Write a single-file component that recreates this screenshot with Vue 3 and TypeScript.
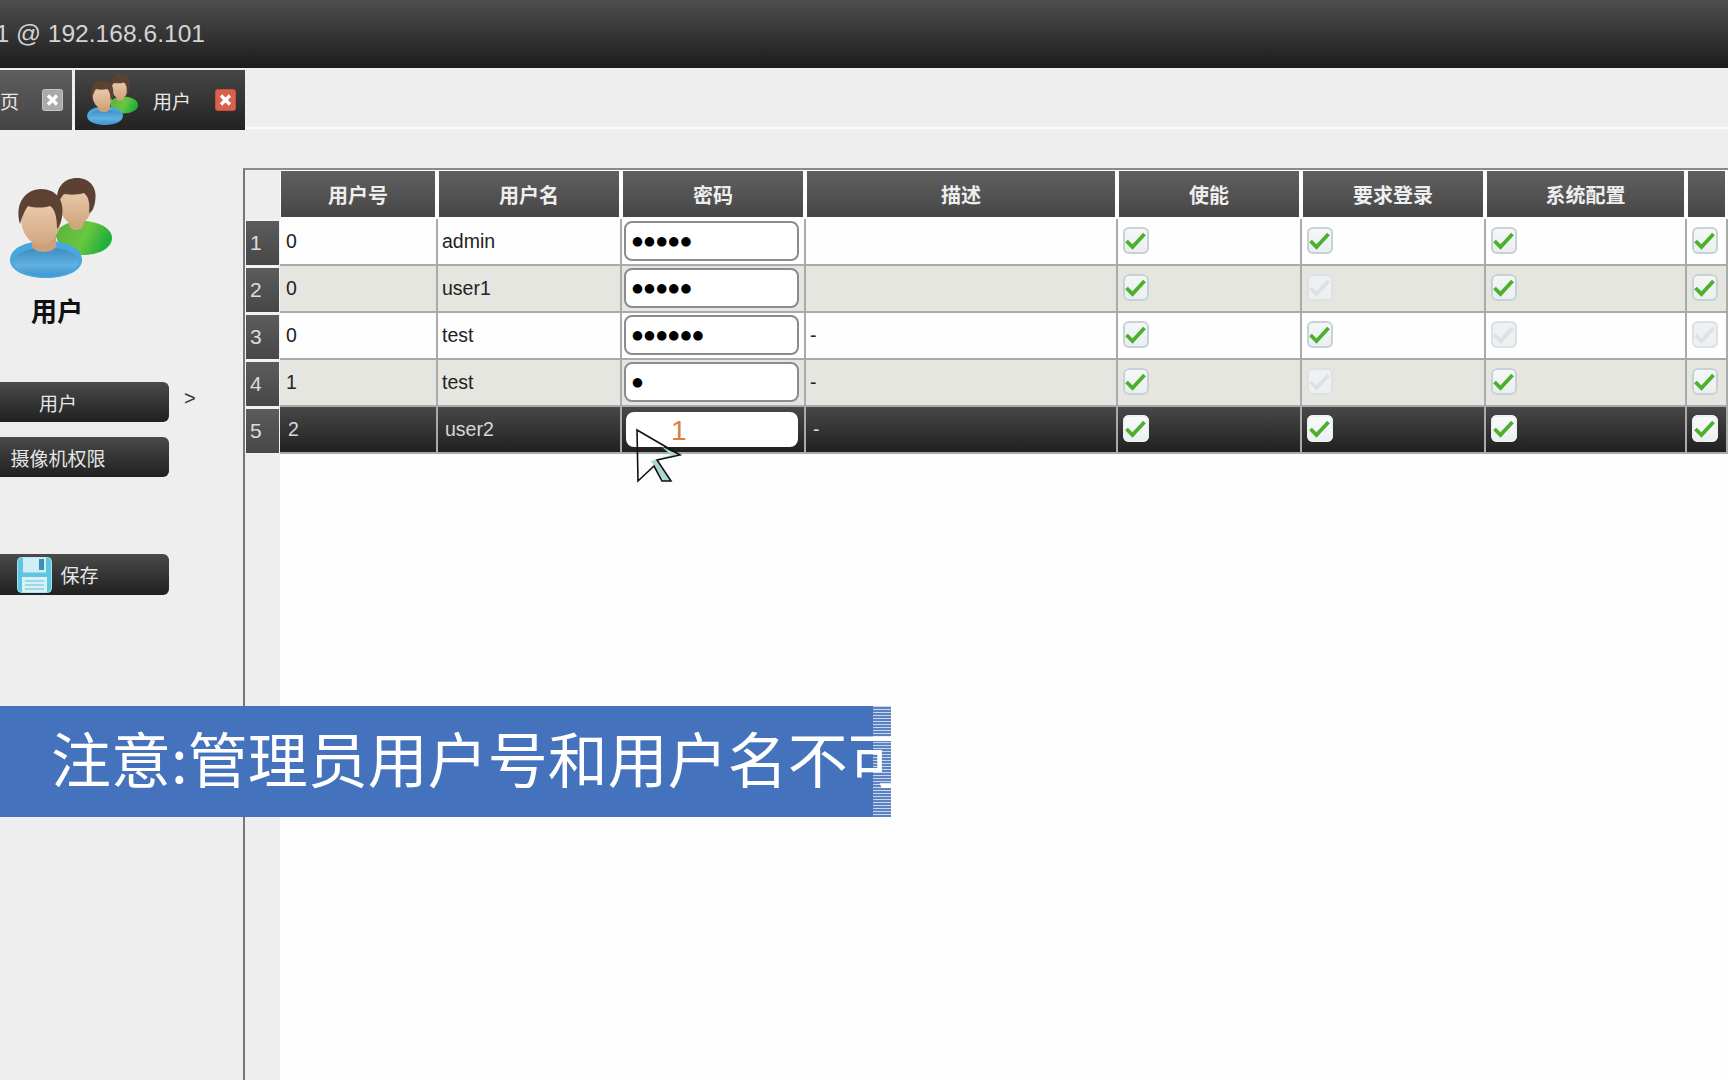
<script setup lang="ts">
interface Row {
  no: number
  id: string
  name: string
  pwd: number | string
  desc: string
  checks: boolean[]
  active?: boolean
}

const headers: string[] = ['用户号', '用户名', '密码', '描述', '使能', '要求登录', '系统配置', '']

const rows: Row[] = [
  { no: 1, id: '0', name: 'admin', pwd: 5, desc: '', checks: [true, true, true, true] },
  { no: 2, id: '0', name: 'user1', pwd: 5, desc: '', checks: [true, false, true, true] },
  { no: 3, id: '0', name: 'test', pwd: 6, desc: '-', checks: [true, true, false, false] },
  { no: 4, id: '1', name: 'test', pwd: 1, desc: '-', checks: [true, false, true, true] },
  { no: 5, id: '2', name: 'user2', pwd: '1', desc: '-', checks: [true, true, true, true], active: true }
]

const dots = (n: number): string => '●'.repeat(n)
</script>

<template>
  <div class="page">
    <svg class="defs" width="0" height="0" aria-hidden="true">
      <defs>
        <linearGradient id="blueBody" x1="0" y1="0" x2="0" y2="1">
          <stop offset="0" stop-color="#3a8cc0" />
          <stop offset="0.6" stop-color="#62b0e0" />
          <stop offset="1" stop-color="#3d98d4" />
        </linearGradient>
        <linearGradient id="greenBody" x1="0" y1="0" x2="1" y2="0.3">
          <stop offset="0" stop-color="#5aae3c" />
          <stop offset="0.6" stop-color="#6ac640" />
          <stop offset="1" stop-color="#22b03a" />
        </linearGradient>
        <linearGradient id="skin" x1="0" y1="0" x2="0" y2="1">
          <stop offset="0" stop-color="#f0d6bc" />
          <stop offset="1" stop-color="#d2a67e" />
        </linearGradient>
        <symbol id="users" viewBox="0 0 102 100">
          <path d="M45 56C50 46 62 43 72 43c16 0 30 7 30 17 0 11-15 17-29 17-8 0-16-2-22-5z" fill="url(#greenBody)" />
          <path d="M59 36h15v9c0 4-4 7-8 7s-7-3-7-7z" fill="#cfa57e" />
          <ellipse cx="66" cy="24" rx="16.500" ry="23" fill="url(#skin)" />
          <path d="M48 27C44 10 54 0 67 0c13 0 21 10 18 24-1 6-3 10-6 11 1-9 0-16-5-20-6 2-15 2-20 1-3 3-5 7-6 11z" fill="#5c4032" />
          <path d="M0 82C0 71 14 63 36 63s36 8 36 19-16 18-36 18S0 93 0 82z" fill="#4aa6df" />
          <ellipse cx="36" cy="84" rx="33" ry="14.500" fill="url(#blueBody)" />
          <path d="M22 58h24v10c0 3-6 6-12 6s-12-3-12-6z" fill="#cba07a" />
          <ellipse cx="31" cy="40" rx="20" ry="27" fill="url(#skin)" />
          <path d="M10 46C4 25 16 11 31 11c15 0 24 11 21 28-1 6-3 10-5 12 0-12-2-20-7-23-7 2-15 2-22 0-3 4-6 11-8 18z" fill="#5d4233" />
        </symbol>
        <symbol id="check" viewBox="0 0 26 27">
          <path d="M3.500 14l6 6L21.500 7" fill="none" stroke="currentColor" stroke-width="3.800" />
        </symbol>
      </defs>
    </svg>

    <header class="topbar">
      <div class="title">1 @ 192.168.6.101</div>
    </header>

    <nav class="tabs">
      <div class="tab inactive">
        <span class="tab-label">首页</span>
        <svg class="close" viewBox="0 0 21 22"><rect x="0.500" y="0.500" width="20" height="21" rx="2" fill="#aaa" stroke="#c4c4c4" /><path d="M6 6.500l9 9M15 6.500l-9 9" stroke="#fff" stroke-width="3.400" /></svg>
      </div>
      <div class="tab active">
        <svg class="tab-icon"><use href="#users" /></svg>
        <span class="tab-label">用户</span>
        <svg class="close" viewBox="0 0 21 22"><rect x="0.500" y="0.500" width="20" height="21" rx="2" fill="#d9604c" stroke="#c4503f" /><path d="M6 6.500l9 9M15 6.500l-9 9" stroke="#fff" stroke-width="3.400" /></svg>
      </div>
    </nav>

    <main class="main">
      <aside class="side">
        <svg class="big-icon"><use href="#users" /></svg>
        <div class="side-label">用户</div>
        <div class="nav-row">
          <button class="btn">用户</button>
          <span class="arrow">&gt;</span>
        </div>
        <button class="btn second">摄像机权限</button>
        <button class="btn save">
          <svg class="disk" viewBox="0 0 35 36">
            <rect x="0.500" y="0.500" width="34" height="35" rx="4" fill="#5ec6de" stroke="#a5e2ee" />
            <rect x="6" y="0.500" width="23" height="15" fill="#cfeef5" />
            <rect x="22" y="2" width="5" height="11" fill="#3f8fb0" />
            <rect x="5" y="20" width="25" height="15" fill="#d7f1f6" />
            <path d="M8 24h19M8 28h19M8 32h19" stroke="#8ccfdf" stroke-width="1.500" />
          </svg>
          <span>保存</span>
        </button>
      </aside>

      <section class="content">
        <div class="panel">
          <div class="row head">
            <div class="gutter"></div>
            <div v-for="(h, i) in headers" :key="i" class="th">{{ h }}</div>
          </div>
          <div
            v-for="(r, ri) in rows"
            :key="r.no"
            class="row body"
            :class="{ alt: ri % 2 === 1, current: r.active }"
          >
            <div class="gutter"><span class="no">{{ r.no }}</span></div>
            <div class="td text first">{{ r.id }}</div>
            <div class="td text">{{ r.name }}</div>
            <div class="td pwd">
              <div v-if="typeof r.pwd === 'number'" class="field"><span class="dots">{{ dots(r.pwd) }}</span></div>
              <div v-else class="field editing">{{ r.pwd }}</div>
            </div>
            <div class="td text">{{ r.desc }}</div>
            <div v-for="(c, ci) in r.checks" :key="ci" class="td chk">
              <span class="box" :class="{ off: !c }">
                <svg class="tick"><use href="#check" /></svg>
              </span>
            </div>
          </div>
        </div>
      </section>
    </main>

    <div class="banner">
      <span class="banner-text">注意:管理员用户号和用户名不可</span>
    </div>

    <svg class="cursor" viewBox="0 0 50 56">
      <path d="M26 18L43 27 21 32 35 53H29L16 33 36 27z" fill="#a9d8d3" />
      <path d="M2 2L45 27 22 32 36 53H27L19 38 3 53z" fill="none" stroke="#111" stroke-width="1.600" />
    </svg>
  </div>
</template>

<style>
html, body {
  margin: 0;
  overflow: hidden;
  background: #eee;
}
</style>

<style scoped>
.page {
  position: relative;
  width: 1728px;
  height: 1080px;
  overflow: hidden;
  display: flex;
  flex-direction: column;
  background: #eee;
  font-family: "Liberation Sans", "Noto Sans CJK SC", sans-serif;
}
.defs { position: absolute; }

.topbar {
  height: 68px;
  flex: none;
  display: flex;
  align-items: center;
  background: linear-gradient(#4e4e4e, #1c1c1c);
}
.title {
  width: 205px;
  display: flex;
  justify-content: flex-end;
  overflow: hidden;
  white-space: nowrap;
  font-size: 24.600px;
  color: #d4d4d4;
}

.tabs {
  height: 61px;
  flex: none;
  box-sizing: border-box;
  display: flex;
  gap: 3px;
  padding-top: 2px;
  background: #eee;
  border-bottom: 2px solid #fafafa;
}
.tab {
  display: flex;
  align-items: center;
  height: 60px;
  box-sizing: border-box;
  color: #e8e8e8;
  font-size: 19px;
}
.tab.inactive {
  width: 72px;
  justify-content: flex-end;
  overflow: hidden;
  padding-right: 9px;
  background: linear-gradient(#5e5e5e, #444);
}
.tab.active {
  width: 170px;
  padding-left: 12px;
  background: linear-gradient(#474747, #222);
}
.tab-label {
  flex: none;
  white-space: nowrap;
}
.inactive .tab-label { margin-right: 23px; }
.active .tab-label { margin-left: 15px; }
.tab-icon {
  width: 51px;
  height: 50px;
  flex: none;
}
.close {
  width: 21px;
  height: 22px;
  flex: none;
}
.active .close { margin-left: 24px; }

.main {
  flex: 1;
  display: flex;
  min-height: 0;
}
.side {
  width: 243px;
  flex: none;
  display: flex;
  flex-direction: column;
  padding-top: 49px;
  box-sizing: border-box;
}
.big-icon {
  width: 102px;
  height: 100px;
  margin-left: 10px;
  flex: none;
}
.side-label {
  width: 114px;
  margin-top: 16px;
  text-align: center;
  font-size: 26px;
  line-height: 36px;
  font-weight: 700;
  color: #111;
}
.nav-row {
  display: flex;
  margin-top: 52px;
  gap: 15px;
}
.arrow {
  font-size: 20px;
  line-height: 32px;
  color: #333;
}
.btn {
  width: 226px;
  height: 40px;
  margin-left: -57px;
  flex: none;
  display: flex;
  align-items: center;
  justify-content: center;
  gap: 8px;
  padding: 0 0 0 4px;
  border: 0;
  border-radius: 6px;
  background: linear-gradient(#4a4a4a, #202020);
  color: #e6e6e6;
  font-family: inherit;
  font-size: 19px;
}
.second { margin-top: 15px; }
.save { margin-top: 77px; height: 41px; }
.disk { width: 35px; height: 36px; flex: none; }

.content {
  flex: 1;
  min-width: 0;
  padding-top: 39px;
  display: flex;
}
.panel {
  flex: 1;
  box-sizing: border-box;
  border-left: 2px solid #777;
  border-top: 2px solid #8a8a8a;
  padding-top: 1px;
  background: linear-gradient(90deg, #eee 35px, #fdfdfd 35px);
}
.row {
  display: grid;
  grid-template-columns: 35px 158px 184px 184px 312px 184px 184px 201px 41px;
}
.head {
  height: 48px;
}
.th {
  margin: 0 3px 2px 1px;
  display: flex;
  align-items: center;
  justify-content: center;
  background: linear-gradient(#606060, #464646);
  color: #eee;
  font-size: 20px;
  font-weight: 700;
}
.body {
  height: 47px;
  color: #222;
  font-size: 19.500px;
}
.gutter {
  box-sizing: border-box;
  min-width: 0;
}
.body .gutter {
  padding: 2px 1px 0 1px;
  background: #f2f2f2;
}
.no {
  display: flex;
  align-items: center;
  height: 44px;
  box-sizing: border-box;
  padding-left: 4px;
  background: linear-gradient(#5c5c5c, #474747);
  color: #ddd;
  font-size: 21px;
}
.td {
  box-sizing: border-box;
  min-width: 0;
  background: #fefefe;
  border-right: 2px solid #aaa;
  border-bottom: 2px solid #aaa;
}
.alt .td { background: #e6e6e1; }
.text {
  display: flex;
  align-items: center;
  padding-left: 4px;
}
.text.first { padding-left: 6px; }
.pwd {
  padding: 2px 5px 0 2px;
}
.field {
  height: 40px;
  box-sizing: border-box;
  display: flex;
  align-items: center;
  padding: 0 0 2px 6px;
  border: 2px solid #8c8c8c;
  border-radius: 8px;
  background: #fff;
}
.dots {
  font-family: "DejaVu Sans", sans-serif;
  font-size: 12.500px;
  letter-spacing: 1.200px;
  color: #000;
}
.chk {
  padding: 8px 0 0 5px;
}
.box {
  display: block;
  width: 26px;
  height: 27px;
  border-radius: 6px;
  background: linear-gradient(#f6f8f8, #e8eef0);
  box-shadow: inset 0 0 0 2px #c8d2d6;
  color: #4cb02c;
}
.box.off {
  background: #eef1f2;
  box-shadow: inset 0 0 0 2px #dbe1e4;
  color: #dbe1e4;
}
.tick {
  display: block;
  width: 26px;
  height: 27px;
}
.current .td {
  background: linear-gradient(#484848, #202020);
  color: #d8d8d8;
  border-bottom-color: #aaa;
}
.current .text { padding-left: 7px; }
.current .text.first { padding-left: 8px; }
.current .pwd { padding: 5px 6px 0 4px; }
.current .box {
  background: linear-gradient(#fbfcfc, #e9eff1);
  box-shadow: inset 0 0 0 2px #eef1f2;
}
.field.editing {
  height: 35px;
  padding: 2px 0 0 45px;
  border: 0;
  font-size: 28px;
  color: #d9803f;
}

.banner {
  position: absolute;
  left: 0;
  top: 706px;
  width: 891px;
  height: 111px;
  overflow: hidden;
  display: flex;
  align-items: center;
  padding-left: 51px;
  box-sizing: border-box;
  background:
    repeating-linear-gradient(#c9d6ea 0 1.500px, #5b83c4 1.500px 3px) right / 18px 100% no-repeat,
    #4472bd;
  color: #fff;
  font-family: "Noto Sans CJK SC", sans-serif;
  font-size: 60px;
  white-space: nowrap;
}
.banner-text { margin-top: -10px; }

.cursor {
  position: absolute;
  left: 635px;
  top: 428px;
  width: 50px;
  height: 56px;
}
</style>
